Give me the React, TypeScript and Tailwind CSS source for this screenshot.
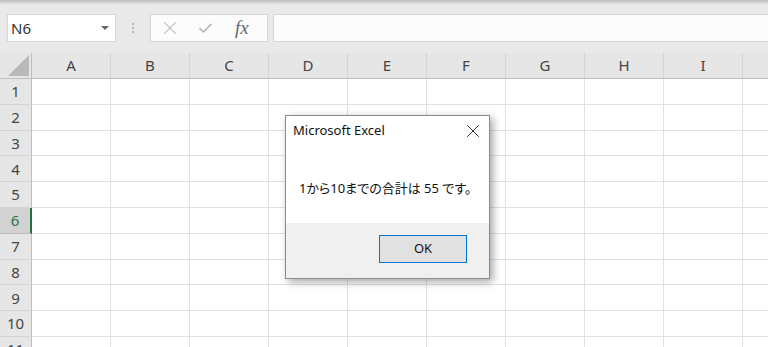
import { X, Check } from "lucide-react";

const COLS = ["A", "B", "C", "D", "E", "F", "G", "H", "I", ""];
const ROWS = [1, 2, 3, 4, 5, 6, 7, 8, 9, 10, 11];
const SELECTED_ROW = 6;

function FormulaBar() {
  return (
    <div className="flex h-[53px] flex-col bg-[#e9e9e9]">
      <div className="h-[5px] bg-gradient-to-b from-[#bdbdbd] to-[#e9e9e9]" />
      <div className="mt-[9px] flex h-[28px] items-stretch">
        <div className="ml-[7px] flex w-[109px] items-center justify-between border border-[#d6d6d6] bg-white pl-[3px] pr-[6px]">
          <span className="text-[15px] text-[#333]">N6</span>
          <span className="h-0 w-0 border-x-[4px] border-t-[4px] border-x-transparent border-t-[#666]" />
        </div>
        <div className="flex w-[34px] flex-col items-center justify-center gap-[2px]">
          <span className="size-[2px] bg-[#b5b5b5]" />
          <span className="size-[2px] bg-[#b5b5b5]" />
          <span className="size-[2px] bg-[#b5b5b5]" />
        </div>
        <div className="flex w-[118px] items-center border border-[#d6d6d6] bg-[#fcfcfc]">
          <X className="ml-[8px] size-[22px] text-[#b3b3b3]" strokeWidth={1.1} />
          <Check className="ml-[16px] size-[17px] text-[#b3b3b3]" strokeWidth={2.2} />
          <span className="ml-[21px] font-['Liberation_Serif',serif] text-[19px] italic text-[#666]">fx</span>
        </div>
        <div className="ml-[5px] flex-1 border border-r-0 border-[#d6d6d6] bg-[#fcfcfc]" />
      </div>
    </div>
  );
}

function Sheet() {
  return (
    <div className="grid grid-cols-[32px_repeat(10,79px)] grid-rows-[26px_repeat(11,25.8px)]">
      <div className="relative border-b border-r border-[#bdbdbd] bg-[#e6e6e6]">
        <div className="absolute bottom-[2px] right-[2px] h-0 w-0 border-b-[21px] border-l-[21px] border-b-[#b9b9b9] border-l-transparent" />
      </div>
      {COLS.map((c, i) => (
        <div
          key={i}
          className="flex items-center justify-center border-b border-r border-b-[#bdbdbd] border-r-[#d4d4d4] bg-[#e6e6e6] text-[15px] text-[#444]"
        >
          {c}
        </div>
      ))}
      {ROWS.map((r) => {
        const sel = r === SELECTED_ROW;
        return [
          <div
            key={`h${r}`}
            className={
              sel
                ? "flex items-center justify-center border-b border-r-2 border-b-[#bdbdbd] border-r-[#217346] bg-[#d2d2d2] text-[15px] text-[#217346]"
                : "flex items-center justify-center border-b border-r border-b-[#d4d4d4] border-r-[#bdbdbd] bg-[#e6e6e6] text-[15px] text-[#444]"
            }
          >
            {r}
          </div>,
          ...COLS.map((_, i) => (
            <div key={`${i}-${r}`} className="border-b border-r border-[#e1e1e1] bg-white" />
          )),
        ];
      })}
    </div>
  );
}

function MessageBox() {
  return (
    <div className="absolute left-[285px] top-[115px] flex h-[164px] w-[205px] flex-col border border-[#8a8a8a] bg-white shadow-[3px_3px_8px_rgba(0,0,0,0.35)]">
      <div className="flex h-[107px] flex-col">
        <div className="flex items-center justify-between pl-[7px] pr-[5px] pt-[4px]">
          <span className="text-[13px] text-[#111]">Microsoft Excel</span>
          <X className="size-[22px] text-[#222]" strokeWidth={1} />
        </div>
        <p className="ml-[13px] mt-[37px] text-[13px] text-[#111] [font-feature-settings:'palt']">
          1から10までの合計は 55 です。
        </p>
      </div>
      <div className="flex flex-1 items-start justify-end bg-[#f0f0f0] pr-[22px] pt-[12px]">
        <button
          type="button"
          className="flex h-[28px] w-[88px] items-center justify-center border border-[#0078d7] bg-[#e1e1e1] text-[13px] text-[#111]"
        >
          OK
        </button>
      </div>
    </div>
  );
}

export default function App() {
  return (
    <div className="relative h-[347px] w-[768px] overflow-hidden bg-white font-['Noto_Sans','Noto_Sans_CJK_JP',sans-serif]">
      <FormulaBar />
      <Sheet />
      <MessageBox />
    </div>
  );
}
